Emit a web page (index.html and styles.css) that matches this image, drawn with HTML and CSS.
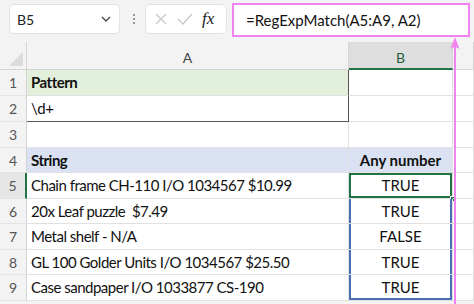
FILE: index.html
```html
<!DOCTYPE html>
<html lang="en">
<head>
    <meta charset="UTF-8" />
    <title>RegExpMatch</title>
    <link rel="stylesheet" href="styles.css">
</head>
<body>
<div class="app">
    <div class="toolbar">
        <div class="name-box">
            <span>B5</span>
            <svg class="chev" width="10" height="6" viewBox="0 0 10 6"><path d="M1 1 L5 5 L9 1" fill="none" stroke="#444" stroke-width="1.3"/></svg>
        </div>
        <div class="grip"><i></i><i></i><i></i></div>
        <div class="fx-box">
            <svg width="14" height="14" viewBox="0 0 14 14"><path d="M2 2 L12 12 M12 2 L2 12" stroke="#c8c8c8" stroke-width="1.3"/></svg>
            <svg width="16" height="14" viewBox="0 0 16 14"><path d="M1 7 L6 12 L15 2" fill="none" stroke="#c8c8c8" stroke-width="1.3"/></svg>
            <span class="fx">fx</span>
        </div>
        <div class="formula">=RegExpMatch(A5:A9, A2)</div>
    </div>

    <div class="sheet">
        <div class="corner"><span></span></div>
        <div class="col-head">A</div>
        <div class="col-head active">B</div>
        <div class="col-head"></div>

        <div class="row-head">1</div>
        <div class="cell text pattern bold">Pattern</div>
        <div class="cell"></div>
        <div class="cell"></div>

        <div class="row-head">2</div>
        <div class="cell text pattern-end">\d+</div>
        <div class="cell"></div>
        <div class="cell"></div>

        <div class="row-head">3</div>
        <div class="cell"></div>
        <div class="cell"></div>
        <div class="cell"></div>

        <div class="row-head">4</div>
        <div class="cell text head bold">String</div>
        <div class="cell head bold center">Any number</div>
        <div class="cell"></div>

        <div class="row-head selected">5</div>
        <div class="cell text">Chain frame CH-110 I/O 1034567 $10.99</div>
        <div class="cell center current">TRUE<span class="handle"></span></div>
        <div class="cell"></div>

        <div class="row-head">6</div>
        <div class="cell text">20x Leaf puzzle&nbsp; $7.49</div>
        <div class="cell center spill">TRUE</div>
        <div class="cell"></div>

        <div class="row-head">7</div>
        <div class="cell text">Metal shelf - N/A</div>
        <div class="cell center spill">FALSE</div>
        <div class="cell"></div>

        <div class="row-head">8</div>
        <div class="cell text">GL 100 Golder Units I/O 1034567 $25.50</div>
        <div class="cell center spill">TRUE</div>
        <div class="cell"></div>

        <div class="row-head">9</div>
        <div class="cell text">Case sandpaper I/O 1033877 CS-190</div>
        <div class="cell center spill last">TRUE</div>
        <div class="cell"></div>
    </div>

    <svg class="arrow" width="12" height="268" viewBox="0 0 12 268">
        <path d="M6 1 L10.5 13 L6 10.5 L1.5 13 Z" fill="#f183f1"/>
        <line x1="6" y1="10" x2="6" y2="268" stroke="#f183f1" stroke-width="2"/>
    </svg>
</div>
</body>
</html>
```

FILE: styles.css
```css
:root {
    --grid: #e1e1e1;
    --pink: #f183f1;
    --green: #217346;
    --blue: #4a6fb5;
}

* {
    box-sizing: border-box;
    margin: 0;
    padding: 0;
}

body {
    font-family: Lato, 'Open Sans', sans-serif;
    background: #f3f3f3;
    color: #111;
    overflow: hidden;
}

.app {
    position: relative;
    width: 474px;
    height: 304px;
}

.toolbar {
    display: flex;
    align-items: center;
    height: 42px;
    padding: 0 4px 4px 9px;
}

.name-box {
    display: flex;
    align-items: center;
    justify-content: space-between;
    width: 111px;
    height: 30px;
    background: white;
    border: 1px solid #e2e2e2;
    border-radius: 5px;
    padding: 0 8px 0 7px;
    font-size: 14px;
    color: #222;
}

.grip {
    display: flex;
    flex-direction: column;
    gap: 2px;
    margin: 0 10px 0 13px;
}

.grip i {
    width: 2px;
    height: 2px;
    background: #999;
}

.fx-box {
    display: flex;
    align-items: center;
    gap: 9px;
    width: 82px;
    height: 30px;
    background: white;
    border: 1px solid #e2e2e2;
    border-radius: 5px;
    padding: 0 6px 0 8px;
}

.fx {
    font-family: 'Liberation Serif', serif;
    font-style: italic;
    font-size: 17px;
    color: #222;
}

.formula {
    flex: 1;
    margin-left: 5px;
    height: 34px;
    margin-top: 2px;
    background: white;
    border: 2px solid var(--pink);
    padding: 6px 0 0 12px;
    font-size: 15px;
    color: #111;
}

.sheet {
    display: grid;
    grid-template-columns: 27px 322px 104px 1fr;
    grid-template-rows: 28px 26px 26px 26px 25px 26px 25px 26px 25px 26px;
    background: white;
}

.corner {
    background: #f3f3f3;
    border-bottom: 1px solid #d4d4d4;
    border-right: 1px solid #d4d4d4;
    position: relative;
}

.corner span {
    position: absolute;
    right: 3px;
    bottom: 3px;
    border-left: 14px solid transparent;
    border-bottom: 14px solid #dcdcdc;
}

.col-head {
    background: #f3f3f3;
    border-bottom: 1px solid #d4d4d4;
    border-right: 1px solid #d4d4d4;
    text-align: center;
    font-size: 14px;
    line-height: 22px;
    padding-top: 5px;
    color: #444;
}

.col-head.active {
    background: #dedede;
    border-bottom: 2px solid var(--green);
    color: #1f5e3a;
}

.row-head {
    background: #f3f3f3;
    border-right: 1px solid #d4d4d4;
    border-bottom: 1px solid #e4e4e4;
    text-align: center;
    font-size: 14px;
    line-height: 25px;
    color: #555;
}

.row-head.selected {
    border-right: 2px solid var(--green);
    background: #e6e6e6;
}

.cell {
    position: relative;
    border-right: 1px solid var(--grid);
    border-bottom: 1px solid var(--grid);
    padding-left: 4px;
    font-size: 15px;
    line-height: 25px;
    white-space: nowrap;
}

.text {
    letter-spacing: -0.5px;
}

.bold {
    font-weight: 700;
}

.center {
    text-align: center;
    padding-left: 0;
}

.pattern {
    background: #e2efda;
    border-right: 1px solid #555;
}

.pattern-end {
    border-right: 1px solid #555;
    border-bottom: 1px solid #555;
}

.head {
    background: #d9e1f2;
}

.current {
    box-shadow: inset 0 0 0 2px var(--green);
}

.handle {
    position: absolute;
    right: -4px;
    bottom: -4px;
    width: 6px;
    height: 6px;
    background: var(--green);
    border: 1px solid white;
}

.spill {
    box-shadow: inset 2px 0 0 var(--blue), inset -2px 0 0 var(--blue);
}

.spill.last {
    box-shadow: inset 2px 0 0 var(--blue), inset -2px 0 0 var(--blue), inset 0 -2px 0 var(--blue);
}

.arrow {
    position: absolute;
    left: 449px;
    top: 36px;
}
```
